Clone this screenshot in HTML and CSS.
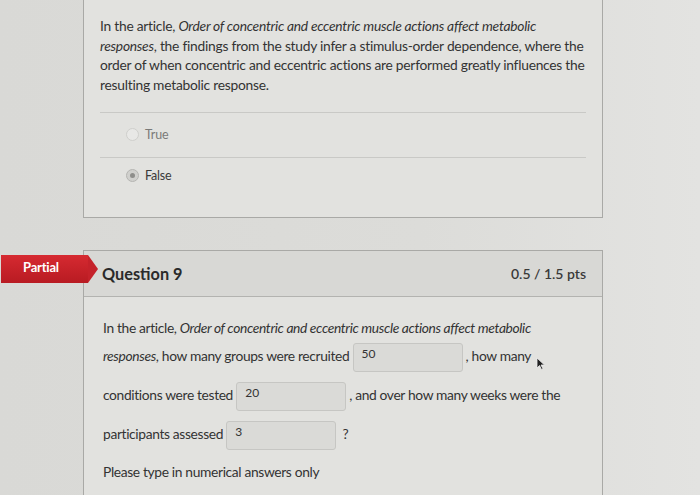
FILE: index.html
```html
<!DOCTYPE html>
<html lang="en">
<head>
<meta charset="utf-8">
<title>Quiz</title>
<link rel="stylesheet" href="styles.css">
</head>
<body>
<main class="page">
  <section class="card card-prev">
    <p class="qtext">In the article, <em>Order of concentric and eccentric muscle actions affect metabolic responses</em>, the findings from the study infer a stimulus-order dependence, where the order of when concentric and eccentric actions are performed greatly influences the resulting metabolic response.</p>
    <div class="answers">
      <div class="answer">
        <span class="radio"></span>
        <span class="label label-off">True</span>
      </div>
      <div class="answer">
        <span class="radio radio-on"></span>
        <span class="label">False</span>
      </div>
    </div>
  </section>

  <section class="card card-q">
    <div class="badge">Partial</div>
    <header class="qhead">
      <h2 class="qtitle">Question 9</h2>
      <span class="pts">0.5 / 1.5 pts</span>
    </header>
    <div class="qbody">
      <p class="fill">In the article, <em>Order of concentric and eccentric muscle actions affect metabolic responses</em>, how many groups were recruited <span class="blank">50</span>, how many conditions were tested <span class="blank">20</span>, and over how many weeks were the participants assessed <span class="blank">3</span> ?</p>
      <p class="note">Please type in numerical answers only</p>
    </div>
    <svg class="cursor" width="9" height="13" viewBox="0 0 9 13"><path d="M1 1 L1 11 L3.5 8.5 L5.5 12.5 L7 11.8 L5 8 L8.5 8 Z" fill="#222" stroke="#eee" stroke-width="0.8"/></svg>
  </section>
</main>
</body>
</html>
```

FILE: styles.css
```css
html, body {
  margin: 0;
  padding: 0;
}
body {
  width: 700px;
  height: 495px;
  overflow: hidden;
  background: linear-gradient(to right, #d9d9d6 0%, #dcdcd9 60%, #e3e3e1 100%);
  font-family: Lato, "Open Sans", "Liberation Sans", sans-serif;
  color: #333;
}
.page {
  padding-left: 83px;
  width: 520px;
}
.card {
  border: 1px solid #a9a9a6;
  background: #e2e2df;
  box-sizing: border-box;
}
.card-prev {
  margin-top: -1px;
  padding: 16px 10px 20px 16px;
}
.qtext {
  margin: 0;
  font-size: 13.8px;
  letter-spacing: -0.25px;
  line-height: 19.5px;
  color: #333;
}
.qtext em, .fill em {
  font-style: italic;
}
.answers {
  margin-top: 18px;
  margin-right: 6px;
}
.answer {
  display: flex;
  align-items: center;
  height: 45px;
  box-sizing: border-box;
  border-top: 1px solid #c9c9c6;
  padding-left: 26px;
  padding-bottom: 2px;
}
.answer + .answer {
  height: 40px;
  padding-bottom: 4px;
}
.radio {
  width: 11px;
  height: 11px;
  border-radius: 50%;
  border: 1px solid #cfcfcc;
  background: #e8e8e6;
  position: relative;
  flex: none;
}
.radio-on {
  border-color: #b5b5b2;
  background: #d0d0cd;
}
.radio-on::after {
  content: "";
  position: absolute;
  left: 3px;
  top: 3px;
  width: 5px;
  height: 5px;
  border-radius: 50%;
  background: #8e8e8b;
}
.label {
  margin-left: 6px;
  font-size: 12.5px;
  letter-spacing: -0.2px;
  color: #3a3a3a;
}
.label-off {
  color: #7a7a78;
}
.card-q {
  margin-top: 32px;
  position: relative;
  height: 260px;
}
.badge {
  position: absolute;
  left: -83px;
  top: 4px;
  width: 87px;
  height: 28px;
  padding-left: 22px;
  box-sizing: border-box;
  background: linear-gradient(to bottom, #d62a31, #b81b22);
  color: #fff;
  font-weight: 700;
  font-size: 13px;
  letter-spacing: -0.2px;
  line-height: 25px;
}
.badge::after {
  content: "";
  position: absolute;
  right: -10px;
  top: 0;
  border-top: 14px solid transparent;
  border-bottom: 14px solid transparent;
  border-left: 10px solid #c5222a;
}
.qhead {
  display: flex;
  align-items: center;
  justify-content: space-between;
  height: 45px;
  padding: 0 16px 0 18px;
  background: #d8d8d5;
  border-bottom: 1px solid #b3b3b0;
}
.qtitle {
  margin: 0;
  font-size: 16.3px;
  font-weight: 700;
  color: #2a2a2a;
}
.pts {
  font-size: 14px;
  font-weight: 600;
  color: #3a3a3a;
}
.qbody {
  padding: 21px 19px 0 19px;
}
.fill {
  margin: 0;
  font-size: 13.8px;
  letter-spacing: -0.35px;
  line-height: 20px;
  width: 472px;
}
.blank {
  display: inline-block;
  vertical-align: middle;
  width: 110px;
  height: 29px;
  box-sizing: border-box;
  margin: 5px 3px 5px 0;
  padding: 2px 0 0 8px;
  border: 1px solid #c6c6c3;
  border-radius: 3px;
  background: #dadad7;
  font-size: 12px;
  letter-spacing: 0;
  line-height: 16px;
  color: #333;
}
.note {
  margin: 7px 0 0 0;
  font-size: 13.8px;
  letter-spacing: -0.35px;
  line-height: 20px;
}
.cursor {
  position: absolute;
  left: 452px;
  top: 106px;
}
```
